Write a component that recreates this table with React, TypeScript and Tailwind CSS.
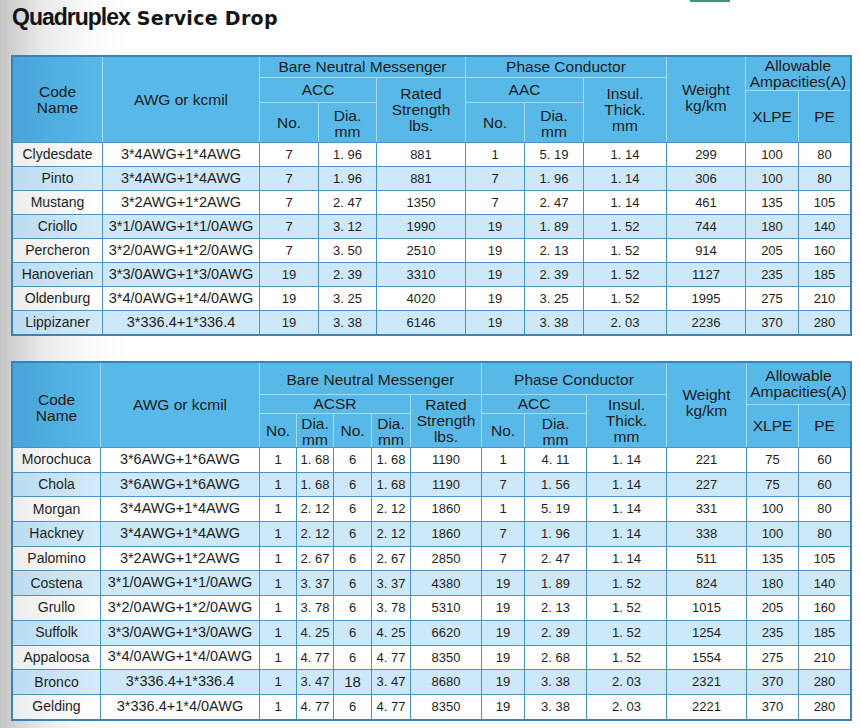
import React from "react";

type Row = string[];

const t1: Row[] = [
  ["Clydesdate", "3*4AWG+1*4AWG", "7", "1. 96", "881", "1", "5. 19", "1. 14", "299", "100", "80"],
  ["Pinto", "3*4AWG+1*4AWG", "7", "1. 96", "881", "7", "1. 96", "1. 14", "306", "100", "80"],
  ["Mustang", "3*2AWG+1*2AWG", "7", "2. 47", "1350", "7", "2. 47", "1. 14", "461", "135", "105"],
  ["Criollo", "3*1/0AWG+1*1/0AWG", "7", "3. 12", "1990", "19", "1. 89", "1. 52", "744", "180", "140"],
  ["Percheron", "3*2/0AWG+1*2/0AWG", "7", "3. 50", "2510", "19", "2. 13", "1. 52", "914", "205", "160"],
  ["Hanoverian", "3*3/0AWG+1*3/0AWG", "19", "2. 39", "3310", "19", "2. 39", "1. 52", "1127", "235", "185"],
  ["Oldenburg", "3*4/0AWG+1*4/0AWG", "19", "3. 25", "4020", "19", "3. 25", "1. 52", "1995", "275", "210"],
  ["Lippizaner", "3*336.4+1*336.4", "19", "3. 38", "6146", "19", "3. 38", "2. 03", "2236", "370", "280"],
];

const t2: Row[] = [
  ["Morochuca", "3*6AWG+1*6AWG", "1", "1. 68", "6", "1. 68", "1190", "1", "4. 11", "1. 14", "221", "75", "60"],
  ["Chola", "3*6AWG+1*6AWG", "1", "1. 68", "6", "1. 68", "1190", "7", "1. 56", "1. 14", "227", "75", "60"],
  ["Morgan", "3*4AWG+1*4AWG", "1", "2. 12", "6", "2. 12", "1860", "1", "5. 19", "1. 14", "331", "100", "80"],
  ["Hackney", "3*4AWG+1*4AWG", "1", "2. 12", "6", "2. 12", "1860", "7", "1. 96", "1. 14", "338", "100", "80"],
  ["Palomino", "3*2AWG+1*2AWG", "1", "2. 67", "6", "2. 67", "2850", "7", "2. 47", "1. 14", "511", "135", "105"],
  ["Costena", "3*1/0AWG+1*1/0AWG", "1", "3. 37", "6", "3. 37", "4380", "19", "1. 89", "1. 52", "824", "180", "140"],
  ["Grullo", "3*2/0AWG+1*2/0AWG", "1", "3. 78", "6", "3. 78", "5310", "19", "2. 13", "1. 52", "1015", "205", "160"],
  ["Suffolk", "3*3/0AWG+1*3/0AWG", "1", "4. 25", "6", "4. 25", "6620", "19", "2. 39", "1. 52", "1254", "235", "185"],
  ["Appaloosa", "3*4/0AWG+1*4/0AWG", "1", "4. 77", "6", "4. 77", "8350", "19", "2. 68", "1. 52", "1554", "275", "210"],
  ["Bronco", "3*336.4+1*336.4", "1", "3. 47", "18", "3. 47", "8680", "19", "3. 38", "2. 03", "2321", "370", "280"],
  ["Gelding", "3*336.4+1*4/0AWG", "1", "4. 77", "6", "4. 77", "8350", "19", "3. 38", "2. 03", "2221", "370", "280"],
];

const H = "flex items-center justify-center text-center bg-[#58b9e8] text-[#1c1c1c] text-[15.5px] leading-[16px]";

function Body({ rows, cols, rowsClass }: { rows: Row[]; cols: string; rowsClass: string }) {
  return (
    <div className={`grid gap-px bg-[#4a93c4] ${cols} ${rowsClass}`}>
      {rows.map((r, i) =>
        r.map((c, j) => {
          const blue = i % 2 === 1;
          let bg = blue ? "bg-[#cde8f8]" : "bg-white";
          if (j === 0) bg = blue ? "bg-gradient-to-r from-[#bcdcf1] to-[#d4ebf8]" : "bg-gradient-to-r from-[#ededed] to-white";
          const size = j === 0 ? "text-[14px]" : j === 1 ? "text-[14.5px]" : c === "18" ? "text-[15px]" : "text-[13px]";
          return (
            <div key={`${i}-${j}`} className={`flex items-center justify-center text-[#1e1e1e] ${size} ${bg}`}>
              {c}
            </div>
          );
        })
      )}
    </div>
  );
}

function Table1() {
  const cols = "grid-cols-[89px_156px_58px_57px_88px_58px_58px_82px_78px_52px_51px]";
  return (
    <div className="ml-[11px] w-[841px] border-2 border-[#3884ba] bg-[#4a93c4] flex flex-col gap-px">
      <div className={`grid gap-px bg-[#a5dcf3] ${cols} grid-rows-[20px_12px_11px_39px]`}>
        <div className={`${H} col-start-1 row-start-1 row-span-4 bg-gradient-to-r from-[#49a4d9] to-[#58b9e8]`}>Code<br />Name</div>
        <div className={`${H} col-start-2 row-start-1 row-span-4`}>AWG or kcmil</div>
        <div className={`${H} col-start-3 col-span-3 row-start-1`}>Bare Neutral Messenger</div>
        <div className={`${H} col-start-3 col-span-2 row-start-2 row-span-2`}>ACC</div>
        <div className={`${H} col-start-5 row-start-2 row-span-3 leading-[15px]`}>Rated<br />Strength<br />lbs.</div>
        <div className={`${H} col-start-3 row-start-4`}>No.</div>
        <div className={`${H} col-start-4 row-start-4 leading-[13px] pt-[2px]`}>Dia.<br />mm</div>
        <div className={`${H} col-start-6 col-span-3 row-start-1`}>Phase Conductor</div>
        <div className={`${H} col-start-6 col-span-2 row-start-2 row-span-2`}>AAC</div>
        <div className={`${H} col-start-8 row-start-2 row-span-3 leading-[14px]`}>Insul.<br />Thick.<br />mm</div>
        <div className={`${H} col-start-6 row-start-4`}>No.</div>
        <div className={`${H} col-start-7 row-start-4 leading-[13px] pt-[2px]`}>Dia.<br />mm</div>
        <div className={`${H} col-start-9 row-start-1 row-span-4 pb-[4px]`}>Weight<br />kg/km</div>
        <div className={`${H} col-start-10 col-span-2 row-start-1 row-span-2 text-[14px] leading-[13px]`}>Allowable<br />Ampacities(A)</div>
        <div className={`${H} col-start-10 row-start-3 row-span-2`}>XLPE</div>
        <div className={`${H} col-start-11 row-start-3 row-span-2`}>PE</div>
      </div>
      <Body rows={t1} cols={cols} rowsClass="auto-rows-[23px]" />
    </div>
  );
}

function Table2() {
  const cols = "grid-cols-[87px_158px_36px_36px_37px_38px_70px_42px_61px_79px_79px_51px_51px]";
  return (
    <div className="ml-[11px] mt-[25px] w-[841px] border-2 border-[#3884ba] bg-[#4a93c4] flex flex-col gap-px">
      <div className={`grid gap-px bg-[#a5dcf3] ${cols} grid-rows-[31px_9px_8px_33px]`}>
        <div className={`${H} col-start-1 row-start-1 row-span-4 bg-gradient-to-r from-[#49a4d9] to-[#58b9e8] pt-[6px]`}>Code<br />Name</div>
        <div className={`${H} col-start-2 row-start-1 row-span-4`}>AWG or kcmil</div>
        <div className={`${H} col-start-3 col-span-5 row-start-1 pt-[2px]`}>Bare Neutral Messenger</div>
        <div className={`${H} col-start-3 col-span-4 row-start-2 row-span-2`}>ACSR</div>
        <div className={`${H} col-start-7 row-start-2 row-span-3 text-[14px] leading-[15px]`}>Rated<br />Strength<br />lbs.</div>
        <div className={`${H} col-start-3 row-start-4 text-[14px]`}>No.</div>
        <div className={`${H} col-start-4 row-start-4 text-[14px] leading-[13px] pt-[3px]`}>Dia.<br />mm</div>
        <div className={`${H} col-start-5 row-start-4 text-[14px]`}>No.</div>
        <div className={`${H} col-start-6 row-start-4 text-[14px] leading-[13px] pt-[3px]`}>Dia.<br />mm</div>
        <div className={`${H} col-start-8 col-span-3 row-start-1 pt-[2px]`}>Phase Conductor</div>
        <div className={`${H} col-start-8 col-span-2 row-start-2 row-span-2`}>ACC</div>
        <div className={`${H} col-start-10 row-start-2 row-span-3 leading-[14px]`}>Insul.<br />Thick.<br />mm</div>
        <div className={`${H} col-start-8 row-start-4`}>No.</div>
        <div className={`${H} col-start-9 row-start-4 leading-[13px] pt-[3px]`}>Dia.<br />mm</div>
        <div className={`${H} col-start-11 row-start-1 row-span-4 pb-[4px]`}>Weight<br />kg/km</div>
        <div className={`${H} col-start-12 col-span-2 row-start-1 row-span-2 text-[14.5px] leading-[14px]`}>Allowable<br />Ampacities(A)</div>
        <div className={`${H} col-start-12 row-start-3 row-span-2`}>XLPE</div>
        <div className={`${H} col-start-13 row-start-3 row-span-2`}>PE</div>
      </div>
      <Body rows={t2} cols={cols} rowsClass="auto-rows-[23.7px]" />
    </div>
  );
}

export default function App() {
  return (
    <div
      className="relative w-[861px] h-[728px] overflow-hidden bg-[linear-gradient(90deg,#c6c6c6_0px,#ebebeb_45px,#fafafa_90px,#ffffff_125px)]"
      style={{ fontFamily: '"Liberation Sans", Arial, sans-serif' }}
    >
      <div className="absolute left-[690px] top-0 w-[40px] h-[2px] bg-[#3a9a72]" />
      <div className="h-[55px] pl-[12px] pt-[3px] leading-[28px] text-[#141414] font-bold">
        <span className="text-[23px] tracking-[-1px]">Quadruplex</span>
        <span className="text-[19px] ml-[7px] tracking-[0.3px]" style={{ fontFamily: '"DejaVu Sans", sans-serif' }}>
          Service Drop
        </span>
      </div>
      <Table1 />
      <Table2 />
    </div>
  );
}
